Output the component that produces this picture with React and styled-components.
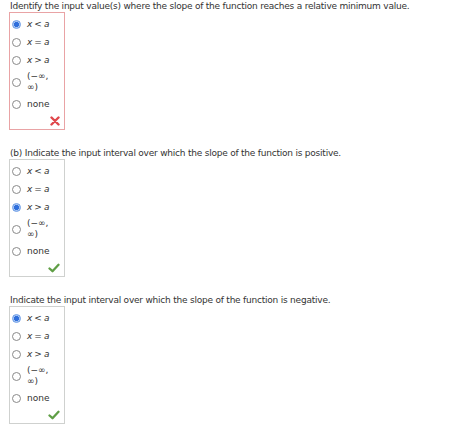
import React from "react";
import styled, { createGlobalStyle } from "styled-components";

const GlobalStyle = createGlobalStyle`
  html, body {
    margin: 0;
    padding: 0;
    background: #fff;
  }
  body {
    font-family: "DejaVu Sans", Verdana, sans-serif;
    color: #333;
  }
`;

const Page = styled.div`
  display: flex;
  flex-direction: column;
  gap: 17px;
  padding: 0 9px;
`;

const Section = styled.div`
  display: flex;
  flex-direction: column;
  align-items: flex-start;
`;

const Prompt = styled.div`
  font-size: 9px;
  letter-spacing: -0.22px;
  line-height: 12px;
  height: 12px;
  padding-left: 1px;
  white-space: nowrap;
`;

const Box = styled.div`
  width: 56px;
  box-sizing: border-box;
  border: 1px solid ${(p) => (p.$wrong ? "#e9a3a5" : "#cfd1cf")};
  padding: 2px 0 0 0;
  display: flex;
  flex-direction: column;
`;

const Row = styled.label`
  display: flex;
  align-items: center;
  gap: 6px;
  height: ${(p) => (p.$tall ? "26px" : "18px")};
  padding-left: 2px;
  font-size: 9px;
  color: #333;
`;

const Radio = styled.span`
  width: 9px;
  height: 9px;
  flex: none;
  box-sizing: border-box;
  border-radius: 50%;
  border: 1px solid ${(p) => (p.$on ? "#6a9be6" : "#8a8a8a")};
  background: ${(p) =>
    p.$on
      ? "radial-gradient(circle, #2f6fdc 0 2.4px, #a9c6f2 2.8px 100%)"
      : "#fff"};
`;

const Lines = styled.span`
  display: flex;
  flex-direction: column;
  line-height: 11px;
`;

const Var = styled.i`
  font-style: italic;
`;

const Op = styled.span`
  margin: 0 2px;
`;

const Mark = styled.div`
  height: 16px;
  display: flex;
  align-items: center;
  justify-content: flex-end;
  padding-right: 4px;
`;

const Cross = () => (
  <svg width="10" height="10" viewBox="0 0 10 10">
    <path d="M1.5 1.5 L8.5 8.5 M8.5 1.5 L1.5 8.5" stroke="#e0474c" strokeWidth="2.4" strokeLinecap="round" />
  </svg>
);

const Check = () => (
  <svg width="12" height="10" viewBox="0 0 12 10">
    <path d="M1.5 5.5 L4.5 8.2 L10.5 1.8" stroke="#5f9e45" strokeWidth="2.3" fill="none" strokeLinecap="round" strokeLinejoin="round" />
  </svg>
);

const options = [
  { key: "lt", label: <><Var>x</Var><Op>&lt;</Op><Var>a</Var></> },
  { key: "eq", label: <><Var>x</Var><Op>=</Op><Var>a</Var></> },
  { key: "gt", label: <><Var>x</Var><Op>&gt;</Op><Var>a</Var></> },
  { key: "all", tall: true, label: <Lines><span>(−∞,</span><span>∞)</span></Lines> },
  { key: "none", label: "none" },
];

const Question = ({ prompt, chosen, wrong }) => (
  <Section>
    <Prompt>{prompt}</Prompt>
    <Box $wrong={wrong}>
      {options.map((o) => (
        <Row key={o.key} $tall={o.tall}>
          <Radio $on={o.key === chosen} />
          <span>{o.label}</span>
        </Row>
      ))}
      <Mark>{wrong ? <Cross /> : <Check />}</Mark>
    </Box>
  </Section>
);

export default function App() {
  return (
    <>
      <GlobalStyle />
      <Page>
        <Question
          prompt="Identify the input value(s) where the slope of the function reaches a relative minimum value."
          chosen="lt"
          wrong
        />
        <Question
          prompt="(b) Indicate the input interval over which the slope of the function is positive."
          chosen="gt"
        />
        <Question
          prompt="Indicate the input interval over which the slope of the function is negative."
          chosen="lt"
        />
      </Page>
    </>
  );
}
